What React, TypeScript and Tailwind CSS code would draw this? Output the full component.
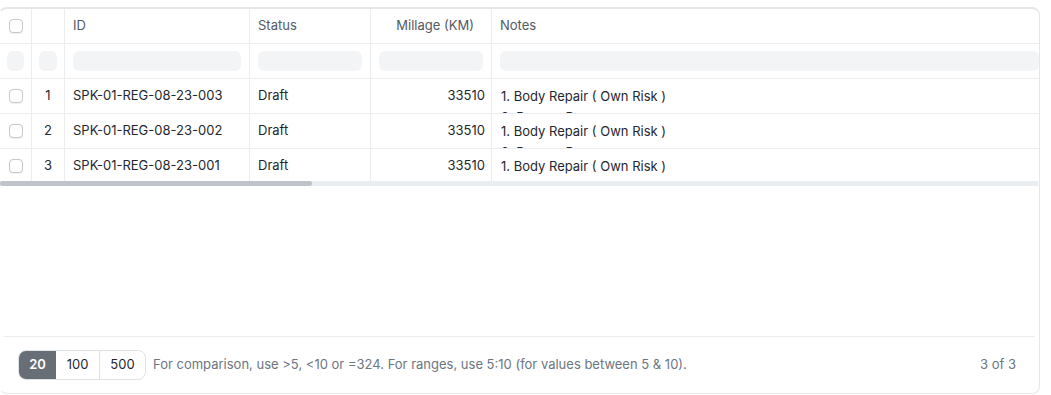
const rows = [
  { n: 1, id: "SPK-01-REG-08-23-003" },
  { n: 2, id: "SPK-01-REG-08-23-002" },
  { n: 3, id: "SPK-01-REG-08-23-001" },
];

const cols = "grid grid-cols-[32px_33px_185px_121px_121px_1fr]";

function Checkbox() {
  return (
    <span className="block w-[14px] h-[14px] rounded-[4px] border border-[#c4c8ce] bg-white shadow-[0_1px_1px_rgba(0,0,0,0.06)]" />
  );
}

function Cell({ children, className = "" }: { children?: React.ReactNode; className?: string }) {
  return (
    <div className={`h-[34px] border-r border-[#ebeef0] flex items-center px-2 overflow-hidden ${className}`}>
      {children}
    </div>
  );
}

function FilterBox() {
  return <div className="h-5 w-full rounded-md bg-[#f3f4f6]" />;
}

export default function App() {
  return (
    <div className="w-[1051px] h-[395px] bg-white pt-[7px] font-['Inter',sans-serif] text-[13px] text-[#1f272e] overflow-hidden">
      <div className="-ml-px w-[1041px] h-[387px] border border-t-2 border-[#e4e7ea] border-l-transparent rounded-lg flex flex-col overflow-hidden">
        {/* table */}
        <div className="flex flex-col">
          <div className={`${cols} border-b border-[#ebeef0] text-[#525a63]`}>
            <Cell className="justify-center px-0">
              <Checkbox />
            </Cell>
            <Cell />
            <Cell>ID</Cell>
            <Cell>Status</Cell>
            <Cell className="justify-end pr-[17px]">Millage (KM)</Cell>
            <Cell className="border-r-0">Notes</Cell>
          </div>
          <div className={`${cols} border-b border-[#ebeef0]`}>
            <Cell className="px-[7px]">
              <FilterBox />
            </Cell>
            <Cell className="px-[7px]">
              <FilterBox />
            </Cell>
            <Cell>
              <FilterBox />
            </Cell>
            <Cell>
              <FilterBox />
            </Cell>
            <Cell>
              <FilterBox />
            </Cell>
            <Cell className="border-r-0 pr-0">
              <FilterBox />
            </Cell>
          </div>
          {rows.map((r, i) => (
            <div key={r.n} className={`${cols} ${i < rows.length - 1 ? "border-b border-[#ebeef0]" : ""}`}>
              <Cell className="justify-center px-0">
                <Checkbox />
              </Cell>
              <Cell className="justify-center px-0">{r.n}</Cell>
              <Cell>{r.id}</Cell>
              <Cell>Draft</Cell>
              <Cell className="justify-end pr-[6px]">33510</Cell>
              <Cell className="border-r-0 items-start pl-[9px]">
                <div className="pt-[7px] leading-[21px]">
                  <div>1. Body Repair ( Own Risk )</div>
                  <div>2. Pasang Baru</div>
                </div>
              </Cell>
            </div>
          ))}
          {/* horizontal scrollbar */}
          <div className="h-[5px] w-[1038px] bg-[#ebeef0] -mt-[2px] relative">
            <div className="h-[5px] w-[312px] bg-[#c0c4ca] rounded-full" />
          </div>
        </div>

        <div className="flex-1" />

        {/* footer */}
        <div className="mx-1 border-t border-[#ebeef0] h-[57px] flex items-center pl-[14px] pr-[19px]">
          <div className="flex h-[30px] rounded-lg border border-[#dfe2e6] overflow-hidden text-[13px]">
            <button className="w-[37px] bg-[#676e76] text-white font-semibold">20</button>
            <button className="w-[44px] border-r border-[#dfe2e6] text-[#1f272e]">100</button>
            <button className="w-[45px] text-[#1f272e]">500</button>
          </div>
          <span className="ml-[7px] text-[#6c7680]">
            For comparison, use &gt;5, &lt;10 or =324. For ranges, use 5:10 (for values between 5 &amp; 10).
          </span>
          <span className="ml-auto text-[#6c7680]">3 of 3</span>
        </div>
      </div>
    </div>
  );
}
